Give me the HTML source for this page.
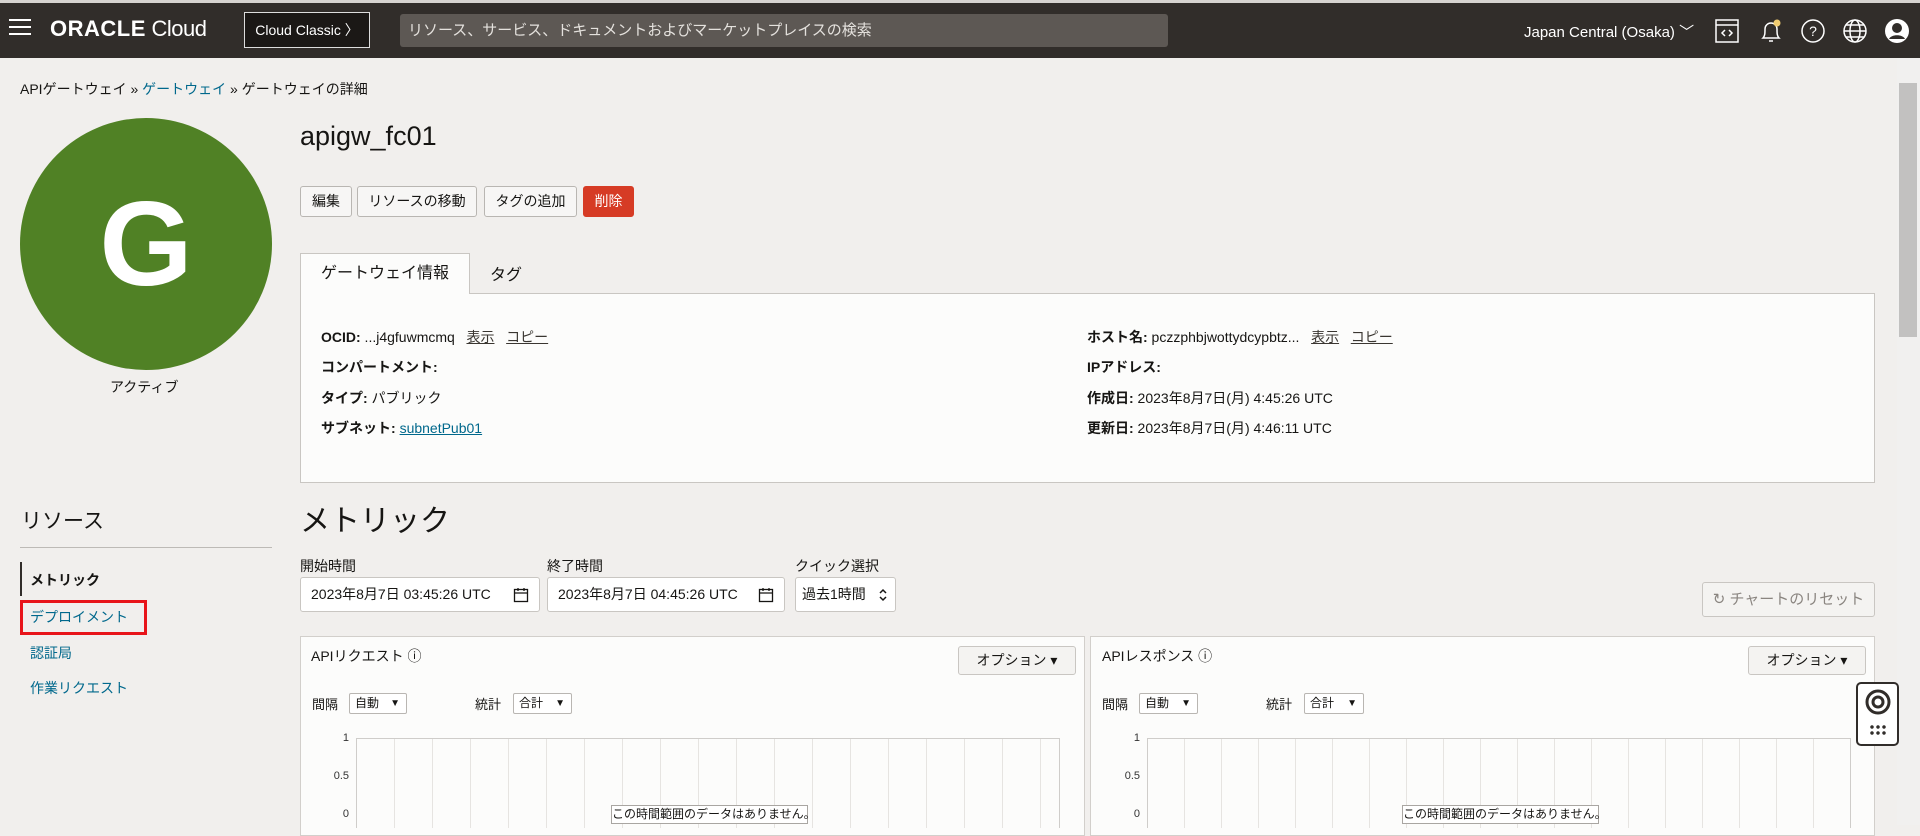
<!DOCTYPE html>
<html><head><meta charset="utf-8"><style>
*{box-sizing:border-box;margin:0;padding:0}
body{width:1920px;height:825px;overflow:hidden;background:#f1efed;font-family:"Liberation Sans","Noto Sans CJK JP",sans-serif;color:#161513;font-size:14px;position:relative}
.a{position:absolute}
.hdr{left:0;top:0;width:1920px;height:58px;background:#312d2a;border-top:3px solid #d6d3d0}
.btn{position:absolute;top:186px;height:31px;border:1px solid #b9b6b2;background:#f7f6f5;border-radius:3px;font-size:14px;line-height:29px;text-align:center}
.row{position:absolute;font-size:14px}
.lnk{text-decoration:underline;color:#3a3631}
.inp{position:absolute;top:577px;height:35px;border:1px solid #c9c6c2;background:#fff;border-radius:3px;font-size:14px;line-height:33px;padding-left:10px;white-space:nowrap}
.panel{position:absolute;top:636px;height:200px;background:#fcfcfb;border:1px solid #d2cfcb}
.sel{position:absolute;height:21px;border:1px solid #b9b6b2;background:#fff;border-radius:2px;font-size:12px;line-height:19px;padding-left:5px;white-space:nowrap}
.sel i{position:absolute;right:6px;top:0;font-style:normal;font-size:10px}
.grid{position:absolute;border:1px solid #cfcdca;border-bottom:none}
.nd{position:absolute;top:805px;height:19px;border:1px solid #a9a6a2;background:#fff;font-size:12px;line-height:17px;text-align:center;white-space:nowrap}
.yl{position:absolute;font-size:11px;color:#333;text-align:right;width:24px}
</style></head><body>
<div class="a hdr">
 <div class="a" style="left:9px;top:16px;width:22px;height:18px">
  <div style="height:2px;background:#fff;margin-bottom:5px"></div><div style="height:2px;background:#fff;margin-bottom:5px"></div><div style="height:2px;background:#fff"></div></div>
 <div class="a" style="left:50px;top:13px;color:#fff;font-size:22px;letter-spacing:-0.5px"><span style="font-weight:bold;letter-spacing:0.5px">ORACLE</span> Cloud</div>
 <div class="a" style="left:244px;top:9px;height:36px;width:126px;border:1px solid #ddd;background:#1b1816;color:#fff;font-size:14px;line-height:34px;text-align:center">Cloud Classic 〉</div>
 <div class="a" style="left:400px;top:11px;width:768px;height:33px;background:#5d5854;border-radius:3px;color:#e4e1dd;font-size:15px;line-height:33px;padding-left:8px">リソース、サービス、ドキュメントおよびマーケットプレイスの検索</div>
 <div class="a" style="left:1524px;top:18px;color:#fff;font-size:15px">Japan Central (Osaka) ﹀</div>
 <svg class="a" style="left:1714px;top:15px" width="26" height="26" viewBox="0 0 26 26" fill="none" stroke="#fff" stroke-width="1.5"><rect x="2" y="2" width="22" height="22"/><line x1="2" y1="7" x2="24" y2="7"/><path d="M11 12l-3 3 3 3M15 12l3 3-3 3"/></svg>
 <svg class="a" style="left:1758px;top:14px" width="26" height="28" viewBox="0 0 26 28" fill="none" stroke="#fff" stroke-width="1.5"><path d="M5 21c2-2 2-5 2-9a6 6 0 0 1 12 0c0 4 0 7 2 9z M11 24h4"/><circle cx="19" cy="6" r="3.5" fill="#f0cc71" stroke="none"/></svg>
 <svg class="a" style="left:1800px;top:15px" width="26" height="26" viewBox="0 0 26 26" fill="none" stroke="#fff" stroke-width="1.5"><circle cx="13" cy="13" r="11"/><text x="13" y="18" fill="#fff" stroke="none" font-size="14" text-anchor="middle" font-family="Liberation Sans">?</text></svg>
 <svg class="a" style="left:1842px;top:15px" width="26" height="26" viewBox="0 0 26 26" fill="none" stroke="#fff" stroke-width="1.5"><circle cx="13" cy="13" r="11"/><ellipse cx="13" cy="13" rx="5" ry="11"/><path d="M2 13h22M4 7h18M4 19h18"/></svg>
 <svg class="a" style="left:1884px;top:15px" width="26" height="26" viewBox="0 0 26 26"><circle cx="13" cy="13" r="12" fill="#fff"/><circle cx="13" cy="10" r="5" fill="#312d2a"/><path d="M5 21c2-5 14-5 16 0" fill="#312d2a"/></svg>
</div>
<div class="a" style="left:1897px;top:58px;width:23px;height:767px;background:#f1f0ef"></div>
<div class="a" style="left:1899px;top:83px;width:18px;height:254px;background:#c2c1c0"></div>
<div class="a" style="left:20px;top:79px;font-size:14px">APIゲートウェイ » <span style="color:#00688c">ゲートウェイ</span> » ゲートウェイの詳細</div>
<div class="a" style="left:20px;top:118px;width:252px;height:252px;border-radius:50%;background:#508125;color:#fff;font-weight:bold;font-size:120px;text-align:center;line-height:252px">G</div>
<div class="a" style="left:110px;top:377px;font-size:14px">アクティブ</div>
<div class="a" style="left:300px;top:121px;font-size:27px">apigw_fc01</div>
<div class="btn" style="left:300px;width:52px">編集</div>
<div class="btn" style="left:357px;width:120px">リソースの移動</div>
<div class="btn" style="left:484px;width:93px">タグの追加</div>
<div class="btn" style="left:583px;width:51px;background:#d63b25;border-color:#d63b25;color:#fff">削除</div>
<div class="a" style="left:300px;top:293px;width:1575px;height:190px;background:#fcfcfb;border:1px solid #c9c6c2"></div>
<div class="a" style="left:300px;top:253px;width:170px;height:41px;background:#fcfcfb;border:1px solid #c9c6c2;border-bottom:none;font-size:16px;text-align:center;line-height:40px">ゲートウェイ情報</div>
<div class="a" style="left:490px;top:261px;font-size:16px">タグ</div>
<div class="row" style="left:321px;top:327px"><b>OCID:</b> ...j4gfuwmcmq&nbsp;&nbsp; <span class="lnk">表示</span>&nbsp;&nbsp; <span class="lnk">コピー</span></div>
<div class="row" style="left:321px;top:357px"><b>コンパートメント:</b></div>
<div class="row" style="left:321px;top:388px"><b>タイプ:</b> パブリック</div>
<div class="row" style="left:321px;top:418px"><b>サブネット:</b> <span class="lnk" style="color:#00688c">subnetPub01</span></div>
<div class="row" style="left:1087px;top:327px"><b>ホスト名:</b> pczzphbjwottydcypbtz...&nbsp;&nbsp; <span class="lnk">表示</span>&nbsp;&nbsp; <span class="lnk">コピー</span></div>
<div class="row" style="left:1087px;top:357px"><b>IPアドレス:</b></div>
<div class="row" style="left:1087px;top:388px"><b>作成日:</b> 2023年8月7日(月) 4:45:26 UTC</div>
<div class="row" style="left:1087px;top:418px"><b>更新日:</b> 2023年8月7日(月) 4:46:11 UTC</div>
<div class="a" style="left:21px;top:505px;font-size:21px">リソース</div>
<div class="a" style="left:20px;top:547px;width:252px;height:1px;background:#bdbab6"></div>
<div class="a" style="left:20px;top:562px;width:2px;height:34px;background:#312d2a"></div>
<div class="a" style="left:30px;top:570px;font-size:14px;font-weight:bold">メトリック</div>
<div class="a" style="left:20px;top:600px;width:127px;height:35px;border:3px solid #e8141a"></div>
<div class="a" style="left:30px;top:607px;font-size:14px;color:#00688c">デプロイメント</div>
<div class="a" style="left:30px;top:643px;font-size:14px;color:#00688c">認証局</div>
<div class="a" style="left:30px;top:678px;font-size:14px;color:#00688c">作業リクエスト</div>
<div class="a" style="left:300px;top:496px;font-size:30px">メトリック</div>
<div class="a" style="left:300px;top:556px;font-size:14px">開始時間</div>
<div class="a" style="left:547px;top:556px;font-size:14px">終了時間</div>
<div class="a" style="left:795px;top:556px;font-size:14px">クイック選択</div>
<div class="inp" style="left:300px;width:240px">2023年8月7日 03:45:26 UTC<svg style="position:absolute;right:10px;top:9px" width="16" height="16" viewBox="0 0 16 16" fill="none" stroke="#161513" stroke-width="1.3"><rect x="1.5" y="2.5" width="13" height="12"/><path d="M1.5 6h13M5 1v3M11 1v3"/></svg></div>
<div class="inp" style="left:547px;width:238px">2023年8月7日 04:45:26 UTC<svg style="position:absolute;right:10px;top:9px" width="16" height="16" viewBox="0 0 16 16" fill="none" stroke="#161513" stroke-width="1.3"><rect x="1.5" y="2.5" width="13" height="12"/><path d="M1.5 6h13M5 1v3M11 1v3"/></svg></div>
<div class="inp" style="left:795px;width:101px;padding-left:6px">過去1時間 <svg style="position:absolute;right:7px;top:10px" width="10" height="14" viewBox="0 0 10 14" fill="none" stroke="#161513" stroke-width="1.5"><path d="M2 5l3-3 3 3M2 9l3 3 3-3"/></svg></div>
<div class="a" style="left:1702px;top:582px;width:173px;height:35px;border:1px solid #c9c6c2;border-radius:3px;background:#f4f3f1;color:#8a8580;font-size:15px;line-height:33px;text-align:center">↻ チャートのリセット</div>
<div class="panel" style="left:300px;width:785px"></div>
<div class="panel" style="left:1090px;width:785px"></div>
<div class="a" style="left:311px;top:646px;font-size:14px">APIリクエスト ⓘ</div>
<div class="a" style="left:1102px;top:646px;font-size:14px">APIレスポンス ⓘ</div>
<div class="a" style="left:958px;top:646px;width:118px;height:29px;border:1px solid #c9c6c2;border-radius:3px;background:#f4f3f1;font-size:14px;line-height:27px;text-align:center">オプション ▾</div>
<div class="a" style="left:1748px;top:646px;width:118px;height:29px;border:1px solid #c9c6c2;border-radius:3px;background:#f4f3f1;font-size:14px;line-height:27px;text-align:center">オプション ▾</div>
<div class="a" style="left:312px;top:694px;font-size:13px">間隔</div>
<div class="sel" style="left:349px;top:693px;width:58px">自動<i>▼</i></div>
<div class="a" style="left:475px;top:694px;font-size:13px">統計</div>
<div class="sel" style="left:513px;top:693px;width:59px">合計<i>▼</i></div>
<div class="a" style="left:1102px;top:694px;font-size:13px">間隔</div>
<div class="sel" style="left:1139px;top:693px;width:59px">自動<i>▼</i></div>
<div class="a" style="left:1266px;top:694px;font-size:13px">統計</div>
<div class="sel" style="left:1304px;top:693px;width:60px">合計<i>▼</i></div>
<div class="grid" style="left:356px;top:738px;width:704px;height:90px;background:repeating-linear-gradient(90deg,transparent 0,transparent 37px,#e6e4e1 37px,#e6e4e1 38px)"></div>
<div class="grid" style="left:1147px;top:738px;width:704px;height:90px;background:repeating-linear-gradient(90deg,transparent 0,transparent 36px,#e6e4e1 36px,#e6e4e1 37px)"></div>
<div class="yl" style="left:325px;top:732px">1</div>
<div class="yl" style="left:325px;top:770px">0.5</div>
<div class="yl" style="left:325px;top:808px">0</div>
<div class="yl" style="left:1116px;top:732px">1</div>
<div class="yl" style="left:1116px;top:770px">0.5</div>
<div class="yl" style="left:1116px;top:808px">0</div>
<div class="nd" style="left:611px;width:197px">この時間範囲のデータはありません。</div>
<div class="nd" style="left:1402px;width:197px">この時間範囲のデータはありません。</div>
<div class="a" style="left:1856px;top:682px;width:43px;height:64px;border:2px solid #312d2a;border-radius:5px;background:#fff">
 <svg style="position:absolute;left:7px;top:5px" width="26" height="26" viewBox="0 0 26 26" fill="none" stroke="#312d2a" stroke-width="3"><circle cx="13" cy="13" r="11"/><circle cx="13" cy="13" r="5"/></svg>
 <div style="position:absolute;left:11px;top:40px;width:18px;height:12px;background:radial-gradient(circle,#312d2a 1.5px,transparent 2px) 0 0/6px 6px"></div>
</div>
</body></html>
